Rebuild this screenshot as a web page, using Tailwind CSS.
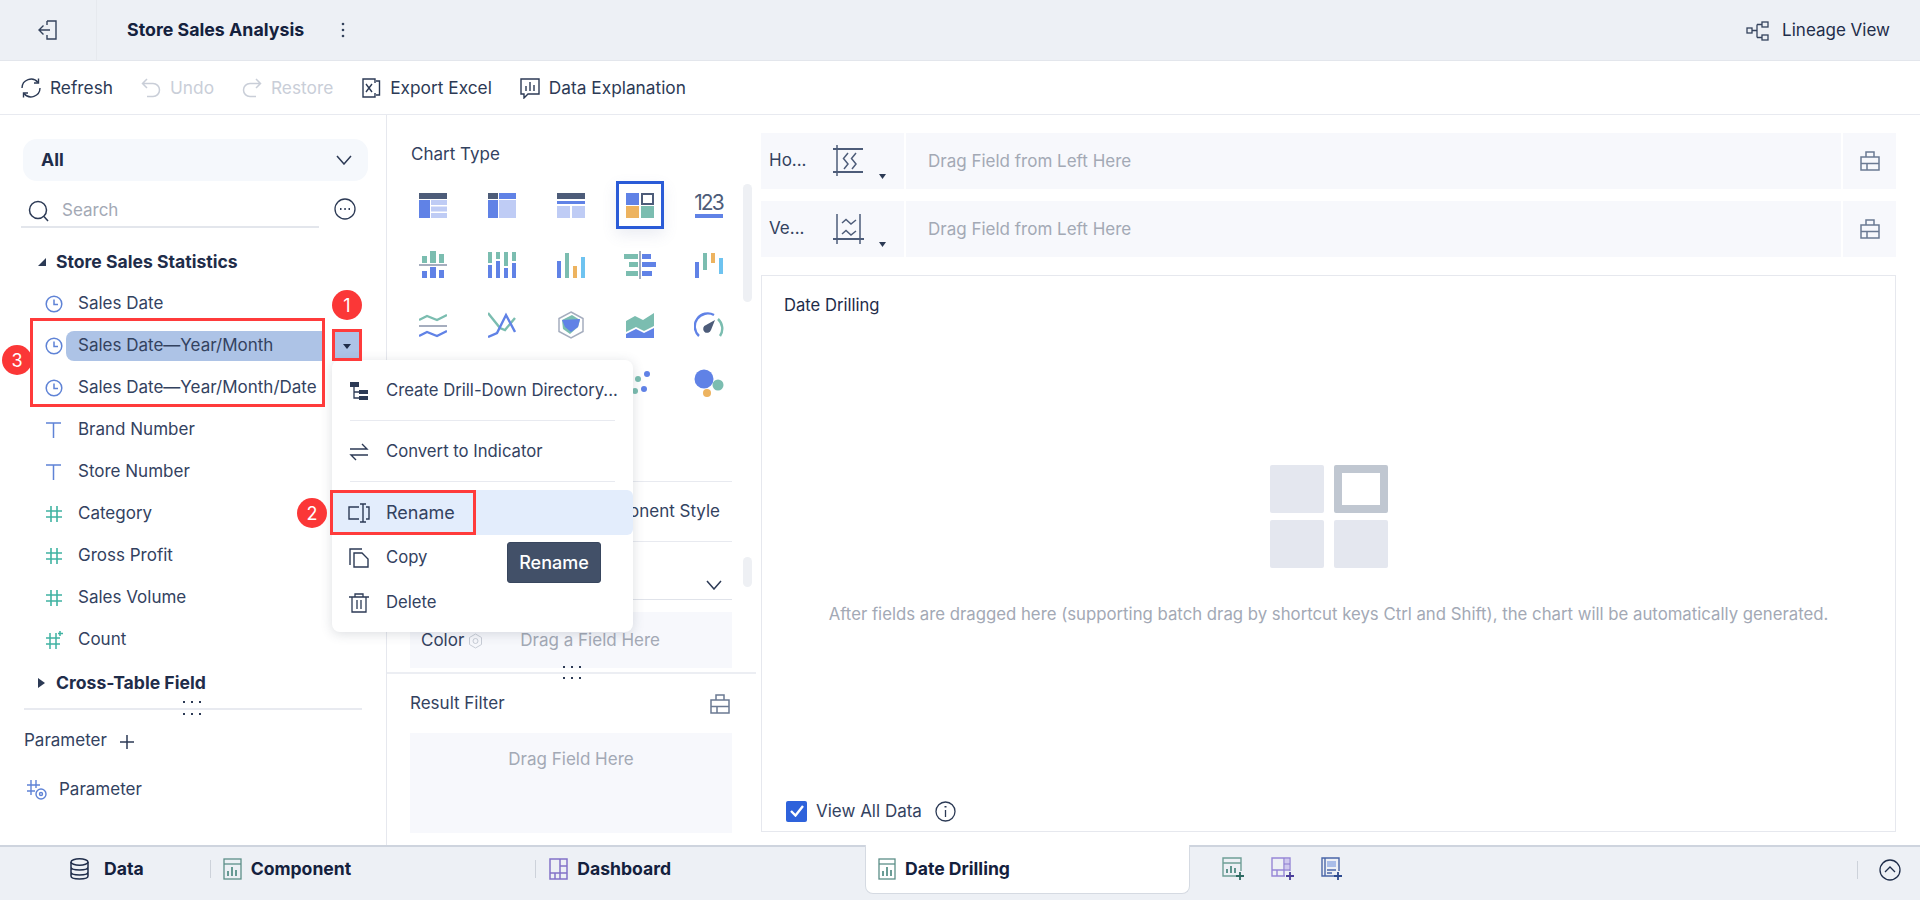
<!DOCTYPE html>
<html>
<head>
    <meta charset="utf-8">
    <script src="https://cdn.jsdelivr.net/npm/@tailwindcss/browser@4"></script>
</head>
<body class="font-['Inter','Liberation_Sans',sans-serif] text-[17px] text-[#1f2d4a] bg-white">
    <svg class="hidden">
        <symbol id="clock" viewBox="0 0 18 18"><circle cx="9" cy="9" r="7.8" fill="none" stroke="#5f83d6" stroke-width="1.5"/><path d="M9 4.500V9.500H13" fill="none" stroke="#5f83d6" stroke-width="1.5"/></symbol>
        <symbol id="text" viewBox="0 0 18 18"><path d="M1 2H16M8.500 2V17" fill="none" stroke="#5f83d6" stroke-width="1.5"/></symbol>
        <symbol id="hash" viewBox="0 0 18 18"><path d="M1 6H17M1 12H17M6 1V17M12 1V17" fill="none" stroke="#40b3a2" stroke-width="1.600"/></symbol>
        <symbol id="brush" viewBox="0 0 20 20"><path d="M6 6V1H14V6M1 6H19V19H1ZM1 12.500H19M7 12.500V19" fill="none" stroke="#6b7a93" stroke-width="1.500"/></symbol>
    </svg>

    <div class="relative w-[1920px] h-[900px] overflow-hidden flex flex-col">
        <!-- Header -->
        <div class="h-[61px] shrink-0 bg-[#edf0f5] border-b border-[#e3e6ec] flex items-center">
            <div class="w-[97px] h-full border-r border-[#e6e9ee] flex items-center justify-center">
                <svg class="w-[20px] h-[20px]" viewBox="0 0 20 20" fill="none" stroke="#34425c" stroke-width="1.400"><path d="M9 1H18V19H9V15"/><path d="M9 1V5M1 10H12M5.500 5.500L1 10L5.500 14.500"/></svg>
            </div>
            <div class="ml-[30px] font-bold text-[17.8px] text-[#14213d]">Store Sales Analysis</div>
            <svg class="ml-[37px] w-[4px] h-[16px]" viewBox="0 0 4 16" fill="#34425c"><circle cx="2" cy="2" r="1.300"/><circle cx="2" cy="8" r="1.300"/><circle cx="2" cy="14" r="1.300"/></svg>
            <div class="ml-auto mr-[30px] mt-[1px] flex items-center gap-[13px]">
                <svg class="w-[23px] h-[20px]" viewBox="0 0 23 20" fill="none" stroke="#34425c" stroke-width="1.300"><rect x="1" y="7" width="5" height="5"/><rect x="16" y="1" width="6" height="5"/><rect x="16" y="14" width="6" height="5"/><path d="M6 9.500H11M11 3.500H16M11 16.500H16M11 3.500V16.500"/></svg>
                <span>Lineage View</span>
            </div>
        </div>

        <!-- Toolbar -->
        <div class="h-[54px] shrink-0 bg-white border-b border-[#e8eaf0] flex items-center pl-[21px] pt-[1px] text-[17.3px] text-[#2c3a55]">
            <svg class="w-[20px] h-[20px]" viewBox="0 0 20 20" fill="none" stroke="#2c3a55" stroke-width="1.400"><path d="M1 10A9 9 0 0 1 17 4.500M19 10A9 9 0 0 1 3 15.500"/><path d="M17.500 0.500V5H13M2.500 19.500V15H7"/></svg>
            <span class="ml-[9px]">Refresh</span>
            <svg class="ml-[28px] w-[20px] h-[20px]" viewBox="0 0 20 20" fill="none" stroke="#c9ced8" stroke-width="1.500"><path d="M6 1L1.500 5.500L6 10M1.500 5.500H12A6.500 6.500 0 0 1 12 18.500H6"/></svg>
            <span class="ml-[9px] text-[#c9ced8]">Undo</span>
            <svg class="ml-[28px] w-[20px] h-[20px]" viewBox="0 0 20 20" fill="none" stroke="#c9ced8" stroke-width="1.500"><path d="M14 1L18.500 5.500L14 10M18.500 5.500H8A6.500 6.500 0 0 0 8 18.500H14"/></svg>
            <span class="ml-[9px] text-[#c9ced8]">Restore</span>
            <svg class="ml-[28px] w-[20px] h-[20px]" viewBox="0 0 20 20" fill="none" stroke="#2c3a55" stroke-width="1.400"><path d="M14 5V1H2V19H14V15M15 3H18.500V17H15"/><path d="M5 6L11 14M11 6L5 14"/></svg>
            <span class="ml-[9px]">Export Excel</span>
            <svg class="ml-[28px] w-[20px] h-[21px]" viewBox="0 0 20 21" fill="none" stroke="#2c3a55" stroke-width="1.400"><path d="M1 1H19V16H8L4 20V16H1Z"/><path d="M6 8V13M10 4V13M14 7V13"/></svg>
            <span class="ml-[9px]">Data Explanation</span>
        </div>

        <!-- Main -->
        <div class="flex-1 flex min-h-0">
            <!-- Left panel -->
            <div class="relative w-[387px] shrink-0 border-r border-[#e6e8ee] pt-[24px]">
                <div class="mx-[23px] h-[42px] w-[345px] rounded-[14px] bg-[#f5f8fc] flex items-center px-[18px] font-bold text-[17.6px]">
                    All
                    <svg class="ml-auto mr-[-2px] w-[16px] h-[10px]" viewBox="0 0 16 10" fill="none" stroke="#2c3a55" stroke-width="1.500"><path d="M1 1L8 9L15 1"/></svg>
                </div>
                <div class="flex items-center mt-[5px]">
                    <div class="ml-[21px] w-[298px] h-[42px] pt-[9px] border-b-2 border-[#e3e6ec] flex items-center pl-[7px]">
                        <svg class="w-[21px] h-[22px]" viewBox="0 0 21 22" fill="none" stroke="#2c3a55" stroke-width="1.500"><circle cx="10" cy="10" r="8.500"/><path d="M16 16.500L20 21"/></svg>
                        <span class="ml-[13px] text-[#a3a9b5]">Search</span>
                    </div>
                    <svg class="ml-[15px] mt-[4px] w-[22px] h-[22px]" viewBox="0 0 22 22" fill="none" stroke="#2c3a55" stroke-width="1.300"><circle cx="11" cy="11" r="10"/><path d="M6 11H7.500M10.300 11H11.800M14.500 11H16" stroke-width="1.800"/></svg>
                </div>
                <div class="h-[42px] mt-[13px] flex items-center pl-[38px] font-bold text-[17.6px]">
                    <svg class="w-[8px] h-[8px]" viewBox="0 0 8 8" fill="#2c3a55"><path d="M0 8H8V0Z"/></svg>
                    <span class="ml-[10px]">Store Sales Statistics</span>
                </div>
                <div class="h-[42px] flex items-center pl-[45px] text-[#33425f]"><svg class="w-[18px] h-[18px]"><use href="#clock"/></svg><span class="ml-[15px]">Sales Date</span></div>
                <div class="h-[42px] flex items-center pl-[45px] text-[#33425f]">
                    <svg class="w-[18px] h-[18px]"><use href="#clock"/></svg>
                    <div class="ml-[3px] h-[30px] w-[257px] bg-[#adc3e6] rounded-l-[8px] flex items-center pl-[12px]">Sales Date—Year/Month</div>
                    <div class="ml-[10px] w-[28px] h-[30px] bg-[#adc3e6] flex items-center justify-center">
                        <svg class="w-[8px] h-[5px]" viewBox="0 0 8 5" fill="#1f2d4a"><path d="M0 0H8L4 5Z"/></svg>
                    </div>
                </div>
                <div class="h-[42px] flex items-center pl-[45px] text-[#33425f]"><svg class="w-[18px] h-[18px]"><use href="#clock"/></svg><span class="ml-[15px]">Sales Date—Year/Month/Date</span></div>
                <div class="h-[42px] flex items-center pl-[45px] text-[#33425f]"><svg class="w-[18px] h-[18px]"><use href="#text"/></svg><span class="ml-[15px]">Brand Number</span></div>
                <div class="h-[42px] flex items-center pl-[45px] text-[#33425f]"><svg class="w-[18px] h-[18px]"><use href="#text"/></svg><span class="ml-[15px]">Store Number</span></div>
                <div class="h-[42px] flex items-center pl-[45px] text-[#33425f]"><svg class="w-[18px] h-[18px]"><use href="#hash"/></svg><span class="ml-[15px]">Category</span></div>
                <div class="h-[42px] flex items-center pl-[45px] text-[#33425f]"><svg class="w-[18px] h-[18px]"><use href="#hash"/></svg><span class="ml-[15px]">Gross Profit</span></div>
                <div class="h-[42px] flex items-center pl-[45px] text-[#33425f]"><svg class="w-[18px] h-[18px]"><use href="#hash"/></svg><span class="ml-[15px]">Sales Volume</span></div>
                <div class="h-[42px] flex items-center pl-[45px] text-[#33425f]">
                    <svg class="w-[20px] h-[20px] mr-[-2px]" viewBox="0 0 20 20"><path d="M1 8H15M1 14H15M5 3V19M11 3V19" fill="none" stroke="#40b3a2" stroke-width="1.500"/><path d="M15 1V6M13 3.500H18" stroke="#40b3a2" stroke-width="1.500"/></svg>
                    <span class="ml-[15px]">Count</span>
                </div>
                <div class="h-[44px] flex items-center pl-[38px] font-bold text-[17.6px]">
                    <svg class="w-[7px] h-[10px]" viewBox="0 0 7 10" fill="#2c3a55"><path d="M0 0L7 5L0 10Z"/></svg>
                    <span class="ml-[11px]">Cross-Table Field</span>
                </div>
                <div class="mt-[3px] mx-[24px] border-t-2 border-[#e8eaf0] relative">
                    <div class="absolute left-[159px] top-[-9px] flex gap-[6px]"><i class="w-[2px] h-[2px] bg-[#2c3a55]"></i><i class="w-[2px] h-[2px] bg-[#2c3a55]"></i><i class="w-[2px] h-[2px] bg-[#2c3a55]"></i></div>
                    <div class="absolute left-[159px] top-[3px] flex gap-[6px]"><i class="w-[2px] h-[2px] bg-[#2c3a55]"></i><i class="w-[2px] h-[2px] bg-[#2c3a55]"></i><i class="w-[2px] h-[2px] bg-[#2c3a55]"></i></div>
                </div>
                <div class="mt-[20px] pl-[24px] h-[22px] flex items-center text-[#33425f]">
                    Parameter
                    <svg class="ml-[12px] w-[16px] h-[16px] mt-[2px]" viewBox="0 0 16 16" fill="none" stroke="#2c3a55" stroke-width="1.500"><path d="M1 8H15M8 1V15"/></svg>
                </div>
                <div class="mt-[27px] pl-[26px] h-[22px] flex items-center text-[#33425f]">
                    <svg class="w-[22px] h-[22px]" viewBox="0 0 22 22" fill="none" stroke="#5f83d6" stroke-width="1.400"><path d="M1 6H14M1 12H9M5 1V16M10 1V9"/><circle cx="15" cy="15" r="5"/><circle cx="15" cy="15" r="1.500"/></svg>
                    <span class="ml-[11px]">Parameter</span>
                </div>
            </div>

            <!-- Middle panel -->
            <div class="relative w-[369px] shrink-0">
                <div class="pl-[24px] pt-[27px] h-[60px] text-[#33425f]">Chart Type</div>
                <div class="relative ml-[11px] w-[345px] grid grid-cols-5 auto-rows-[60px]">
                    <div class="flex items-center justify-center"><svg class="w-[28px] h-[25px]" viewBox="0 0 28 25"><rect width="28" height="6" fill="#4d5c79"/><rect y="7" width="11" height="18" fill="#6082e6"/><rect x="12" y="7" width="16" height="5" fill="#bfccf5"/><rect x="12" y="13.500" width="16" height="5" fill="#bfccf5"/><rect x="12" y="20" width="16" height="5" fill="#bfccf5"/></svg></div>
                    <div class="flex items-center justify-center"><svg class="w-[28px] h-[25px]" viewBox="0 0 28 25"><rect width="10" height="6" fill="#4d5c79"/><rect x="11" width="17" height="6" fill="#6082e6"/><rect y="7" width="10" height="18" fill="#6082e6"/><rect x="11" y="7" width="17" height="18" fill="#bfccf5"/></svg></div>
                    <div class="flex items-center justify-center"><svg class="w-[28px] h-[25px]" viewBox="0 0 28 25"><rect width="28" height="6" fill="#4d5c79"/><rect y="8" width="28" height="3" fill="#6082e6"/><rect y="13" width="13" height="12" fill="#bfccf5"/><rect x="15" y="13" width="13" height="12" fill="#bfccf5"/></svg></div>
                    <div class="flex items-center justify-center"><div class="w-[48px] h-[48px] border-[3px] border-[#2a5bd7] shadow-[0_6px_14px_rgba(90,110,160,0.12)] flex items-center justify-center"><svg class="w-[28px] h-[25px]" viewBox="0 0 28 25"><rect width="13" height="12" fill="#6082e6"/><rect x="16" y="1" width="11" height="10" fill="none" stroke="#4d5c79" stroke-width="2"/><rect y="13" width="13" height="12" fill="#edb35f"/><rect x="15" y="13" width="13" height="12" fill="#7bbdb0"/></svg></div></div>
                    <div class="flex flex-col items-center justify-center">
                        <div class="h-[20px] leading-[20px] text-[21px] tracking-[-2px] text-[#4d5c79]">123</div>
                        <div class="mt-[1px] w-[28px] h-[4px] bg-[#6082e6]"></div>
                    </div>

                    <div class="flex items-center justify-center"><svg class="w-[28px] h-[28px]" viewBox="0 0 28 28"><rect x="3" y="5" width="5" height="7" fill="#7bbdb0"/><rect x="11" y="0" width="6" height="12" fill="#7bbdb0"/><rect x="20" y="3" width="5" height="9" fill="#7bbdb0"/><rect y="13" width="28" height="2" fill="#a5adbe"/><rect x="3" y="20" width="5" height="7" fill="#6082e6"/><rect x="11" y="16" width="6" height="11" fill="#6082e6"/><rect x="20" y="19" width="5" height="8" fill="#6082e6"/></svg></div>
                    <div class="flex items-center justify-center"><svg class="w-[28px] h-[26px]" viewBox="0 0 28 26"><rect width="4" height="11" fill="#7bbdb0"/><rect x="8" width="4" height="7" fill="#7bbdb0"/><rect x="16" width="4" height="14" fill="#7bbdb0"/><rect x="24" width="4" height="9" fill="#7bbdb0"/><rect y="13" width="4" height="13" fill="#6082e6"/><rect x="8" y="9" width="4" height="17" fill="#6082e6"/><rect x="16" y="16" width="4" height="10" fill="#6082e6"/><rect x="24" y="11" width="4" height="15" fill="#6082e6"/></svg></div>
                    <div class="flex items-center justify-center"><svg class="w-[28px] h-[26px]" viewBox="0 0 28 26"><rect y="9" width="4" height="17" fill="#6082e6"/><rect x="8" y="1" width="4" height="25" fill="#7bbdb0"/><rect x="16" y="14" width="4" height="12" fill="#edb35f"/><rect x="24" y="5" width="4" height="21" fill="#6ec3f0"/></svg></div>
                    <div class="flex items-center justify-center"><svg class="w-[32px] h-[28px]" viewBox="0 0 32 28"><rect x="15" width="2" height="28" fill="#a5adbe"/><rect y="3" width="14" height="5" fill="#7bbdb0"/><rect x="5" y="11" width="9" height="5" fill="#7bbdb0"/><rect x="2" y="20" width="12" height="5" fill="#7bbdb0"/><rect x="18" y="3" width="9" height="5" fill="#6082e6"/><rect x="18" y="11" width="14" height="5" fill="#6082e6"/><rect x="18" y="20" width="10" height="5" fill="#6082e6"/></svg></div>
                    <div class="flex items-center justify-center"><svg class="w-[28px] h-[26px]" viewBox="0 0 28 26"><rect y="10" width="4" height="16" fill="#6082e6"/><rect x="8" y="1" width="4" height="17" fill="#7bbdb0"/><rect x="16" y="1" width="4" height="10" fill="#edb35f"/><rect x="24" y="6" width="4" height="16" fill="#6ec3f0"/></svg></div>

                    <div class="flex items-center justify-center"><svg class="w-[28px] h-[25px]" viewBox="0 0 28 25" fill="none" stroke-width="2.400"><path d="M0 7L8 3L18 7L28 2" stroke="#7bbdb0"/><path d="M0 13H28" stroke="#a5adbe" stroke-width="2"/><path d="M0 23L8 19L18 23L28 18" stroke="#6082e6"/></svg></div>
                    <div class="flex items-center justify-center"><svg class="w-[28px] h-[26px]" viewBox="0 0 28 26" fill="none" stroke-width="2.400"><path d="M0 1L12 16L17 18L27 6" stroke="#7bbdb0"/><path d="M0 25L9 21L18 3L27 20" stroke="#6082e6"/></svg></div>
                    <div class="flex items-center justify-center"><svg class="w-[26px] h-[28px]" viewBox="0 0 26 28"><path d="M13 1L25 7.500V20.500L13 27L1 20.500V7.500Z" fill="none" stroke="#a5adbe" stroke-width="1.500"/><path d="M14 4L22 9L20 16L12 23L5 18L4 9Z" fill="#7bbdb0"/><path d="M4 9L22 8L20 16L13 21L7 16Z" fill="#6082e6"/></svg></div>
                    <div class="flex items-center justify-center"><svg class="w-[28px] h-[25px]" viewBox="0 0 28 25"><path d="M0 8L9 3L17 7L28 0V13L18 18L10 14L0 19Z" fill="#7bbdb0"/><path d="M0 21L10 16L18 20L28 15V25H0Z" fill="#6082e6"/></svg></div>
                    <div class="flex items-center justify-center"><svg class="w-[30px] h-[26px]" viewBox="0 0 30 26" fill="none" stroke-width="2.400"><path d="M5 24A13 13 0 0 1 20 3" stroke="#6082e6"/><path d="M24 7A13 13 0 0 1 26 24" stroke="#7bbdb0"/><path d="M12 13L21 8L17 18A4 4 0 1 1 12 13Z" fill="#4d5c79" stroke="none"/></svg></div>

                    <div class="col-start-4 flex items-center justify-center mb-[4px]"><svg class="w-[28px] h-[24px]" viewBox="0 0 28 24"><circle cx="3" cy="11" r="2.500" fill="#6082e6"/><circle cx="12" cy="8" r="3" fill="#7bbdb0"/><circle cx="21" cy="3" r="3" fill="#6082e6"/><circle cx="9" cy="20" r="3" fill="#7bbdb0"/><circle cx="18" cy="18" r="3" fill="#6082e6"/></svg></div>
                    <div class="flex items-center justify-center mb-[4px]"><svg class="w-[30px] h-[28px]" viewBox="0 0 30 28"><circle cx="10" cy="10" r="9.500" fill="#6082e6"/><circle cx="24" cy="16" r="5.500" fill="#7bbdb0"/><circle cx="13" cy="24" r="4" fill="#edb35f"/></svg></div>
                </div>
                <div class="absolute left-[356px] top-[69px] w-[9px] h-[118px] rounded-full bg-[#eef0f4]"></div>

                <div class="absolute top-[366px] left-[23px] w-[322px] h-[61px] border-y border-[#e8eaf0] flex items-center justify-end pr-[12px] text-[#33425f]">Component Style</div>
                <div class="absolute top-[427px] left-[23px] w-[322px] h-[58px] border-b border-[#e0e3ea] flex items-center justify-end pr-[10px] pt-[28px]">
                    <svg class="w-[16px] h-[10px]" viewBox="0 0 16 10" fill="none" stroke="#2c3a55" stroke-width="1.500"><path d="M1 1L8 9L15 1"/></svg>
                </div>
                <div class="absolute left-[356px] top-[442px] w-[9px] h-[30px] rounded-full bg-[#eef0f4]"></div>
                <div class="absolute top-[497px] left-[23px] w-[322px] h-[56px] pt-[2px] bg-[#f7f8fc] flex items-center pl-[11px] text-[#33425f]">
                    Color
                    <svg class="ml-[4px] w-[15px] h-[16px]" viewBox="0 0 15 16" fill="none" stroke="#c8cdd6" stroke-width="1"><path d="M7.500 1L13.500 4.500V11.500L7.500 15L1.500 11.500V4.500Z"/><circle cx="7.500" cy="8" r="2.500"/></svg>
                    <span class="ml-[37px] text-[#a3a9b5]">Drag a Field Here</span>
                </div>
                <div class="absolute top-[557px] left-0 w-full border-t-2 border-[#eceef3]">
                    <div class="absolute left-[176px] top-[-8px] flex gap-[6px]"><i class="w-[2px] h-[2px] bg-[#2c3a55]"></i><i class="w-[2px] h-[2px] bg-[#2c3a55]"></i><i class="w-[2px] h-[2px] bg-[#2c3a55]"></i></div>
                    <div class="absolute left-[176px] top-[3px] flex gap-[6px]"><i class="w-[2px] h-[2px] bg-[#2c3a55]"></i><i class="w-[2px] h-[2px] bg-[#2c3a55]"></i><i class="w-[2px] h-[2px] bg-[#2c3a55]"></i></div>
                </div>
                <div class="absolute top-[577px] left-[23px] w-[322px] h-[24px] flex items-center justify-between pr-[2px] text-[#33425f]">
                    Result Filter
                    <svg class="w-[20px] h-[20px]"><use href="#brush"/></svg>
                </div>
                <div class="absolute top-[618px] left-[23px] w-[322px] h-[100px] bg-[#f7f8fc] text-center pt-[14px] text-[#a3a9b5]">Drag Field Here</div>
            </div>

            <!-- Right panel -->
            <div class="flex-1 pl-[5px] pr-[24px] pt-[18px] flex flex-col min-w-0">
                <div class="h-[56px] flex gap-[2px] shrink-0">
                    <div class="relative w-[143px] bg-[#f7f8fc] flex items-center pl-[8px] text-[#33425f]">
                        Ho...
                        <svg class="absolute left-[72px] top-[12px] w-[30px] h-[31px]" viewBox="0 0 30 31" fill="none" stroke="#4d5c79" stroke-width="1.500"><path d="M0 4H30M0 27H30" stroke-width="2"/><path d="M4 0V31"/><path d="M15 8L10.500 13.500L15 19L11 24M23 8L18.500 13.500L23 19L19 24"/></svg>
                        <svg class="absolute left-[118px] top-[41px] w-[7px] h-[5px]" viewBox="0 0 7 5" fill="#2c3a55"><path d="M0 0H7L3.500 5Z"/></svg>
                    </div>
                    <div class="flex-1 pt-[2px] bg-[#f7f8fc] flex items-center pl-[22px] text-[#a3a9b5]">Drag Field from Left Here</div>
                    <div class="w-[53px] bg-[#f7f8fc] flex items-center justify-center"><svg class="w-[20px] h-[20px]"><use href="#brush"/></svg></div>
                </div>
                <div class="h-[56px] mt-[12px] flex gap-[2px] shrink-0">
                    <div class="relative w-[143px] bg-[#f7f8fc] flex items-center pl-[8px] text-[#33425f]">
                        Ve...
                        <svg class="absolute left-[72px] top-[13px] w-[31px] h-[30px]" viewBox="0 0 31 30" fill="none" stroke="#4d5c79" stroke-width="1.500"><path d="M0 25H31" stroke-width="2"/><path d="M4 0V30M27 0V30"/><path d="M9 9L13 5.500L18 10L23 6M9 20L13 16.500L18 21L23 17"/></svg>
                        <svg class="absolute left-[118px] top-[41px] w-[7px] h-[5px]" viewBox="0 0 7 5" fill="#2c3a55"><path d="M0 0H7L3.500 5Z"/></svg>
                    </div>
                    <div class="flex-1 pt-[2px] bg-[#f7f8fc] flex items-center pl-[22px] text-[#a3a9b5]">Drag Field from Left Here</div>
                    <div class="w-[53px] bg-[#f7f8fc] flex items-center justify-center"><svg class="w-[20px] h-[20px]"><use href="#brush"/></svg></div>
                </div>
                <div class="mt-[18px] h-[557px] border border-[#e6e8ee] flex flex-col items-center pt-[17px] pb-[9px]">
                    <div class="self-start pl-[22px] h-[24px] leading-[24px] text-[16.6px]">Date Drilling</div>
                    <div class="mt-[148px] w-[118px] grid grid-cols-2 gap-x-[10px] gap-y-[7px]">
                        <div class="h-[48px] rounded-[2px] bg-[#e4e7ef]"></div>
                        <div class="h-[48px] rounded-[2px] border-[8px] border-[#c0c7d1] bg-white"></div>
                        <div class="h-[48px] rounded-[2px] bg-[#e4e7ef]"></div>
                        <div class="h-[48px] rounded-[2px] bg-[#e4e7ef]"></div>
                    </div>
                    <div class="mt-[34px] leading-[24px] text-[16.75px] text-[#a3a9b5]">After fields are dragged here (supporting batch drag by shortcut keys Ctrl and Shift), the chart will be automatically generated.</div>
                    <div class="mt-auto self-start pl-[24px] flex items-center h-[22px]">
                        <div class="w-[21px] h-[21px] rounded-[2px] bg-[#2e62db] flex items-center justify-center">
                            <svg class="w-[14px] h-[12px]" viewBox="0 0 14 12" fill="none" stroke="#fff" stroke-width="2.400"><path d="M1 6L5.500 10.500L13 1"/></svg>
                        </div>
                        <span class="ml-[9px] mt-[1px] text-[#33425f]">View All Data</span>
                        <svg class="ml-[13px] w-[21px] h-[21px]" viewBox="0 0 21 21" fill="none" stroke="#2c3a55" stroke-width="1.300"><circle cx="10.500" cy="10.500" r="9.500"/><path d="M10.500 9V16"/><path d="M10.500 5V6.500" stroke-width="2"/></svg>
                    </div>
                </div>
            </div>
        </div>

        <!-- Bottom tabs -->
        <div class="relative h-[55px] shrink-0 bg-[#edf0f5] border-t-[2px] border-[#ced4de] flex items-center pb-[9px] font-bold text-[17.6px] text-[#14213d]">
            <svg class="ml-[70px] w-[19px] h-[22px]" viewBox="0 0 19 22" fill="none" stroke="#1f2d4a" stroke-width="1.500"><ellipse cx="9.500" cy="4" rx="8.500" ry="3.200"/><path d="M1 4V18C1 20 5 21 9.500 21S18 20 18 18V4M1 9C1 11 5 12 9.500 12S18 11 18 9M1 14C1 16 5 17 9.500 17S18 16 18 14"/></svg>
            <span class="ml-[15px]">Data</span>
            <div class="ml-[66px] w-px h-[18px] bg-[#cdd2da]"></div>
            <svg class="ml-[12px] w-[19px] h-[22px]" viewBox="0 0 19 22" fill="none" stroke="#5c8f88" stroke-width="1.300"><rect x="1" y="1" width="17" height="20"/><path d="M1 6H18"/><path d="M5 18V13M9 18V9M13 18V12" stroke="#3b7d74" stroke-width="1.500"/></svg>
            <span class="ml-[9px]">Component</span>
            <div class="ml-[184px] w-px h-[18px] bg-[#cdd2da]"></div>
            <svg class="ml-[13px] w-[19px] h-[22px]" viewBox="0 0 19 22" fill="none" stroke="#8272c8" stroke-width="1.500"><rect x="1" y="1" width="17" height="20"/><path d="M1 15H18M11 1V21M11 8H18M6 15V21"/></svg>
            <span class="ml-[9px]">Dashboard</span>
            <div class="absolute left-[865px] top-[-2px] w-[325px] h-[49px] bg-white rounded-b-[8px] border-b border-x border-[#d5dae2] flex items-center">
                <svg class="ml-[12px] w-[18px] h-[22px]" viewBox="0 0 18 22" fill="none" stroke="#5c8f88" stroke-width="1.300"><rect x="1" y="1" width="16" height="20"/><path d="M1 6H17"/><path d="M5 18V13M9 18V9M13 18V12" stroke="#3b7d74" stroke-width="1.500"/></svg>
                <span class="ml-[9px]">Date Drilling</span>
            </div>
            <div class="absolute left-[1222px] top-[10px] flex gap-[27px]">
                <svg class="w-[22px] h-[24px]" viewBox="0 0 22 24" fill="none" stroke="#6f9f97" stroke-width="1.400"><path d="M14 19H1V1H19V14M1 6H19"/><path d="M5 16V12M9 16V9M13 16V11" stroke="#3b7d74" stroke-width="1.600"/><path d="M18 15V23M14 19H22" stroke="#2f6b63" stroke-width="1.800"/></svg>
                <svg class="w-[23px] h-[24px]" viewBox="0 0 23 24" fill="none" stroke="#9686d6" stroke-width="1.400"><path d="M14 19H1V1H19V14M1 13H19M13 1V19M13 7H19M6 13V19"/><rect x="14" y="2" width="4" height="4" fill="#cfc8ee" stroke="none"/><rect x="14" y="8" width="4" height="4" fill="#cfc8ee" stroke="none"/><path d="M19 15V23M15 19H23" stroke="#4b3f9b" stroke-width="1.800"/></svg>
                <svg class="w-[22px] h-[24px]" viewBox="0 0 22 24" fill="none" stroke="#4a66a8" stroke-width="1.400"><path d="M14 19H1V1H18V14M4 1V19"/><rect x="6" y="4" width="9" height="6" fill="#a9bde8" stroke="none"/><path d="M6 13H15M6 16H11"/><path d="M17 15V23M13 19H21" stroke="#2d4a8f" stroke-width="1.800"/></svg>
            </div>
            <div class="absolute left-[1857px] top-[14px] w-px h-[18px] bg-[#cdd2da]"></div>
            <svg class="absolute left-[1879px] top-[12px] w-[22px] h-[22px]" viewBox="0 0 22 22" fill="none" stroke="#1f2d4a" stroke-width="1.300"><circle cx="11" cy="11" r="10"/><path d="M6 13L11 8L16 13"/></svg>
        </div>

        <!-- Context menu -->
        <div class="absolute left-[332px] top-[360px] w-[301px] h-[272px] bg-white rounded-[8px] shadow-[0_2px_12px_rgba(60,70,90,0.18)] text-[#33425f] text-[16.7px]">
            <div class="h-[60px] pt-[2px] flex items-center pl-[17px]">
                <svg class="w-[20px] h-[20px]" viewBox="0 0 20 20" fill="#2c3a55"><rect x="1" y="1" width="9" height="5"/><rect x="10" y="9" width="9" height="4"/><rect x="10" y="15" width="9" height="4"/><path d="M5 6V17H10M5 11H10" fill="none" stroke="#2c3a55" stroke-width="1.300"/></svg>
                <span class="ml-[17px]">Create Drill-Down Directory...</span>
            </div>
            <div class="mx-[18px] border-t border-[#e8eaf0]"></div>
            <div class="h-[60px] pt-[2px] flex items-center pl-[17px]">
                <svg class="w-[20px] h-[20px]" viewBox="0 0 20 20" fill="none" stroke="#2c3a55" stroke-width="1.400"><path d="M1 7H18L13 2M19 13H2L7 18"/></svg>
                <span class="ml-[17px]">Convert to Indicator</span>
            </div>
            <div class="mx-[18px] border-t border-[#e8eaf0]"></div>
            <div class="mt-[8px] h-[45px] flex items-center pl-[16px] bg-[#e3edfc] rounded-r-[6px]">
                <svg class="w-[22px] h-[20px]" viewBox="0 0 22 20" fill="none" stroke="#2c3a55" stroke-width="1.400"><path d="M11 4H1V16H11M18 4H21V16H18M15 1V19M12 1H18M12 19H18"/></svg>
                <span class="ml-[16px] text-[18px]">Rename</span>
            </div>
            <div class="h-[45px] flex items-center pl-[17px]">
                <svg class="w-[20px] h-[20px]" viewBox="0 0 20 20" fill="none" stroke="#2c3a55" stroke-width="1.400"><path d="M1 17V1H13M5 19V5H13L19 11V19Z"/></svg>
                <span class="ml-[17px]">Copy</span>
            </div>
            <div class="h-[45px] flex items-center pl-[17px]">
                <svg class="w-[20px] h-[20px]" viewBox="0 0 20 20" fill="none" stroke="#2c3a55" stroke-width="1.300"><path d="M0 4H20M6 4V1H14V4M3 4V19H17V4M8 7V16M12 7V16"/></svg>
                <span class="ml-[17px]">Delete</span>
            </div>
        </div>
        <div class="absolute left-[507px] top-[542px] w-[94px] h-[41px] bg-[#425068] border border-[#38465e] rounded-[3px] text-white text-[18px] font-medium flex items-center justify-center">Rename</div>

        <!-- Red annotations -->
        <div class="absolute left-[30px] top-[318px] w-[295px] h-[89px] border-[3px] border-[#ff3b3b]"></div>
        <div class="absolute left-[332px] top-[329px] w-[30px] h-[32px] border-[3px] border-[#ff3b3b]"></div>
        <div class="absolute left-[330px] top-[490px] w-[146px] h-[45px] border-[3px] border-[#ff3b3b]"></div>
        <div class="absolute left-[332px] top-[290px] w-[30px] h-[30px] rounded-full bg-[#fb3737] text-white text-[18px] flex items-center justify-center">1</div>
        <div class="absolute left-[297px] top-[498px] w-[30px] h-[30px] rounded-full bg-[#fb3737] text-white text-[18px] flex items-center justify-center">2</div>
        <div class="absolute left-[2px] top-[345px] w-[30px] h-[30px] rounded-full bg-[#fb3737] text-white text-[18px] flex items-center justify-center">3</div>
    </div>
</body>
</html>
